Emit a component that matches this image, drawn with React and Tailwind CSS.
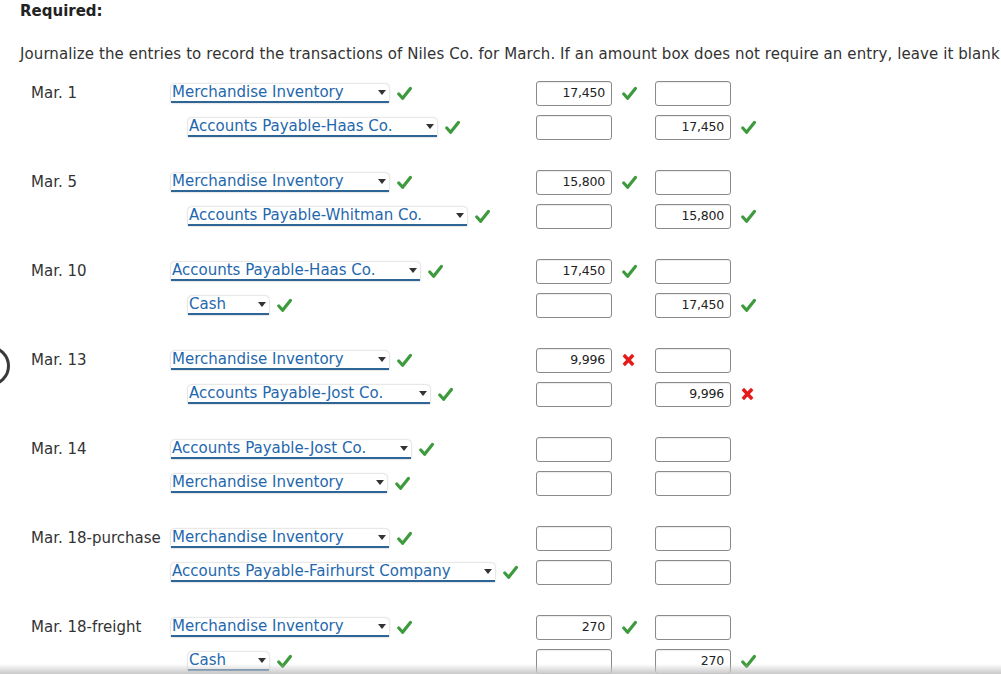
import React from "react";

const Check = () => (
  <svg width="15" height="15" viewBox="0 0 15 15" className="shrink-0">
    <path d="M1.8 8 L5.6 12.2 L13.4 2.4" fill="none" stroke="#3d9a3d" strokeWidth="3.2" strokeLinecap="round" strokeLinejoin="round" />
  </svg>
);

const Cross = () => (
  <svg width="13" height="14" viewBox="0 0 13 14" className="shrink-0">
    <path d="M1.8 2 L11.2 12 M11.2 2 L1.8 12" fill="none" stroke="#e41b1b" strokeWidth="3.4" strokeLinecap="butt" />
  </svg>
);

const Select = ({ text, width, mark }) => (
  <div className="flex items-center gap-[8px]">
    <div
      className="relative h-[19px] rounded-t-[4px] bg-white border-b-2 border-[#2c6596] shadow-[0_0_2px_rgba(0,0,0,0.35)] flex items-center pl-[1px]"
      style={{ width }}
    >
      <span className="text-[#1f68ad] text-[15px] leading-[17px] whitespace-nowrap">{text}</span>
      <span className="absolute right-[3px] top-[6px] w-0 h-0 border-l-[4px] border-r-[4px] border-t-[5px] border-l-transparent border-r-transparent border-t-[#333]" />
    </div>
    {mark === "check" && <Check />}
  </div>
);

const Amount = ({ value, mark }) => (
  <div className="flex items-center w-[119px] shrink-0">
    <div className="w-[76px] h-[25px] rounded-[3px] border border-[#8a8a8a] bg-white shadow-[inset_0_1px_1px_rgba(0,0,0,0.08)] flex items-center justify-end pr-[6px] text-[12.5px] tracking-[-0.2px] text-[#222]">
      {value}
    </div>
    <div className="pl-[10px] flex">
      {mark === "check" && <Check />}
      {mark === "x" && <Cross />}
    </div>
  </div>
);

const groups = [
  {
    label: "Mar. 1",
    rows: [
      { text: "Merchandise Inventory", w: 218, indent: false, a1: "17,450", m1: "check", a2: "", m2: null },
      { text: "Accounts Payable-Haas Co.", w: 249, indent: true, a1: "", m1: null, a2: "17,450", m2: "check" },
    ],
  },
  {
    label: "Mar. 5",
    rows: [
      { text: "Merchandise Inventory", w: 218, indent: false, a1: "15,800", m1: "check", a2: "", m2: null },
      { text: "Accounts Payable-Whitman Co.", w: 279, indent: true, a1: "", m1: null, a2: "15,800", m2: "check" },
    ],
  },
  {
    label: "Mar. 10",
    rows: [
      { text: "Accounts Payable-Haas Co.", w: 249, indent: false, a1: "17,450", m1: "check", a2: "", m2: null },
      { text: "Cash", w: 81, indent: true, a1: "", m1: null, a2: "17,450", m2: "check" },
    ],
  },
  {
    label: "Mar. 13",
    rows: [
      { text: "Merchandise Inventory", w: 218, indent: false, a1: "9,996", m1: "x", a2: "", m2: null },
      { text: "Accounts Payable-Jost Co.", w: 242, indent: true, a1: "", m1: null, a2: "9,996", m2: "x" },
    ],
  },
  {
    label: "Mar. 14",
    rows: [
      { text: "Accounts Payable-Jost Co.", w: 240, indent: false, a1: "", m1: null, a2: "", m2: null },
      { text: "Merchandise Inventory", w: 216, indent: false, a1: "", m1: null, a2: "", m2: null },
    ],
  },
  {
    label: "Mar. 18-purchase",
    rows: [
      { text: "Merchandise Inventory", w: 218, indent: false, a1: "", m1: null, a2: "", m2: null },
      { text: "Accounts Payable-Fairhurst Company", w: 324, indent: false, a1: "", m1: null, a2: "", m2: null },
    ],
  },
  {
    label: "Mar. 18-freight",
    rows: [
      { text: "Merchandise Inventory", w: 218, indent: false, a1: "270", m1: "check", a2: "", m2: null },
      { text: "Cash", w: 81, indent: true, a1: "", m1: null, a2: "270", m2: "check" },
    ],
  },
];

export default function App() {
  return (
    <div
      className="relative w-[1001px] h-[674px] overflow-hidden bg-white text-[#333]"
      style={{ fontFamily: '"DejaVu Sans", Verdana, sans-serif' }}
    >
      <div className="pl-[20px] pt-[1px]">
        <div className="font-bold text-[15px] leading-[20px] text-[#222]">Required:</div>
        <div className="mt-[23px] text-[15px] leading-[20px] tracking-[0.09px] whitespace-nowrap text-[#333]">
          Journalize the entries to record the transactions of Niles Co. for March. If an amount box does not require an entry, leave it blank
        </div>
        <div className="mt-[12px] pl-[11px] flex flex-col gap-[21px]">
          {groups.map((g, gi) => (
            <div key={gi} className="flex flex-col">
              {g.rows.map((r, ri) => (
                <div key={ri} className="flex items-center h-[34px]">
                  <div className="w-[140px] shrink-0 text-[15px] text-[#333] whitespace-nowrap">
                    {ri === 0 ? g.label : ""}
                  </div>
                  <div className={"w-[365px] shrink-0 flex " + (r.indent ? "pl-[17px]" : "")}>
                    <Select text={r.text} width={r.w} mark="check" />
                  </div>
                  <Amount value={r.a1} mark={r.m1} />
                  <Amount value={r.a2} mark={r.m2} />
                </div>
              ))}
            </div>
          ))}
        </div>
      </div>
      <div className="absolute left-[-30px] top-[346px] w-[40px] h-[40px] rounded-full border-[3px] border-[#3a3a3a]" />
      <div className="absolute left-0 right-0 bottom-0 h-[10px] bg-gradient-to-b from-[rgba(200,200,200,0)] to-[#c8c8c8]" />
    </div>
  );
}
